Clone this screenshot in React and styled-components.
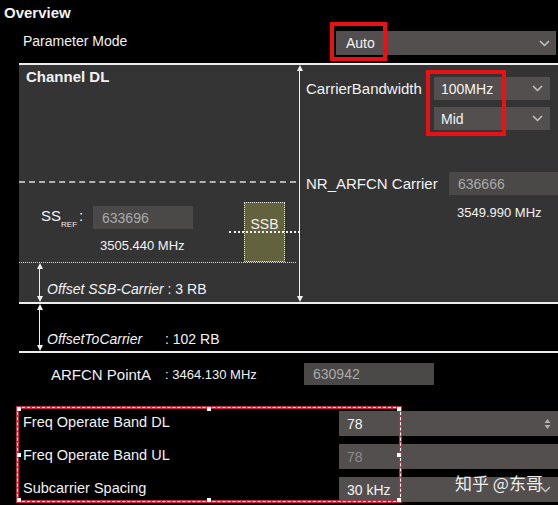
import styled, { createGlobalStyle } from "styled-components";

const GlobalStyle = createGlobalStyle`
  html, body {
    margin: 0;
    padding: 0;
    background: #000;
  }
  body {
    font-family: "Liberation Sans", Arial, sans-serif;
    color: #f2f2f2;
  }
`;

const Page = styled.div`
  position: relative;
  width: 558px;
  height: 505px;
  overflow: hidden;
  background: #000;
`;

const Heading = styled.div`
  height: 24px;
  line-height: 26px;
  padding-left: 4px;
  font-size: 15px;
  font-weight: bold;
`;

const ParamRow = styled.div`
  display: flex;
  align-items: center;
  height: 24px;
  margin-top: 7px;
  padding-left: 23px;
`;

const Label = styled.div`
  flex: none;
  width: ${(p) => (p.$w ? `${p.$w}px` : "auto")};
  font-size: ${(p) => p.$size || 14}px;
  font-style: ${(p) => (p.$italic ? "italic" : "normal")};
  padding-bottom: ${(p) => p.$lift || 0}px;
  white-space: nowrap;
`;

const SelectBox = styled.div`
  position: relative;
  flex: none;
  box-sizing: border-box;
  width: ${(p) => p.$w}px;
  height: ${(p) => p.$h || 24}px;
  padding: 0 ${(p) => p.$pr || 7}px 0 ${(p) => p.$pl || 10}px;
  display: flex;
  align-items: center;
  justify-content: space-between;
  background: #524f4e;
  font-size: 14px;
  color: #f4f4f4;
`;

const Field = styled.div`
  position: relative;
  box-sizing: border-box;
  flex: ${(p) => (p.$w ? "none" : "1")};
  width: ${(p) => (p.$w ? `${p.$w}px` : "auto")};
  height: ${(p) => p.$h || 23}px;
  padding: 0 7px 0 ${(p) => p.$pl || 9}px;
  display: flex;
  align-items: center;
  justify-content: space-between;
  background: ${(p) => (p.$dark ? "#4b4948" : "#524f4e")};
  font-size: 14px;
  color: ${(p) => p.$color || "#f4f4f4"};
`;

const Highlight = styled.div`
  position: absolute;
  left: ${(p) => p.$x}px;
  top: ${(p) => p.$y}px;
  width: ${(p) => p.$w}px;
  height: ${(p) => p.$h}px;
  box-sizing: border-box;
  border: 4px solid #ea1016;
  pointer-events: none;
`;

const Panel = styled.div`
  display: flex;
  height: 237px;
  margin: 8px 0 0 19px;
  background: #353434;
  border-top: 2px solid #ededed;
  border-bottom: 2px solid #ededed;
`;

const LeftCol = styled.div`
  display: flex;
  flex-direction: column;
  width: 277px;
  flex: none;
`;

const TopBlock = styled.div`
  height: 116px;
  border-bottom: 2px dashed #b3b3b3;
`;

const PanelTitle = styled.div`
  padding: 3px 7px;
  font-size: 15px;
  font-weight: bold;
  line-height: 17px;
`;

const MidBlock = styled.div`
  display: flex;
  height: 79px;
  border-bottom: 1px dotted #dcdcdc;
`;

const SSGroup = styled.div`
  padding: 23px 0 0 22px;
`;

const SSRow = styled.div`
  display: flex;
  align-items: center;
  height: 23px;
`;

const SSLabel = styled.div`
  width: 52px;
  font-size: 15px;
  white-space: nowrap;

  sub {
    font-size: 8px;
    vertical-align: -6px;
    margin-right: 2px;
  }
`;

const FreqText = styled.div`
  margin-top: ${(p) => p.$mt || 9}px;
  padding-left: ${(p) => p.$pl}px;
  font-size: 13px;
  line-height: 15px;
`;

const SSBCol = styled.div`
  position: relative;
  margin-left: auto;
  width: 67px;
  display: flex;
  align-items: flex-end;

  &::after {
    content: "";
    position: absolute;
    left: 0;
    right: -4px;
    top: 48px;
    border-top: 2px dotted #f2f2f2;
  }
`;

const SSBBox = styled.div`
  box-sizing: border-box;
  width: 41px;
  height: 60px;
  margin-left: 15px;
  padding-top: 13px;
  text-align: center;
  background: #62633e;
  border: 1px dotted #e8e8e2;
  font-size: 14px;
  line-height: 16px;
`;

const OffsetBlock = styled.div`
  display: flex;
  flex: 1;
  padding-left: 17px;
`;

const OffsetText = styled.div`
  align-self: flex-end;
  margin-left: 4px;
  padding-bottom: ${(p) => p.$pb}px;
  font-size: 14px;
  line-height: 16px;
  white-space: nowrap;

  em {
    display: inline-block;
    width: ${(p) => (p.$labelW ? `${p.$labelW}px` : "auto")};
  }
`;

const ArrowCol = styled.div`
  display: flex;
  flex-direction: column;
  align-items: center;
  width: 7px;
  flex: none;
`;

const ArrowHead = styled.div`
  width: 0;
  height: 0;
  border-left: 3px solid transparent;
  border-right: 3px solid transparent;
  ${(p) =>
    p.$up ? "border-bottom: 6px solid #f0f0f0;" : "border-top: 6px solid #f0f0f0;"}
`;

const ArrowLine = styled.div`
  flex: 1;
  width: 1px;
  background: #f0f0f0;
`;

const RightCol = styled.div`
  flex: 1;
  padding: 12px 0 0 3px;
`;

const CarrierRow = styled.div`
  display: flex;
  align-items: flex-start;
`;

const SelectStack = styled.div`
  position: relative;
  display: flex;
  flex-direction: column;
  gap: 7px;
`;

const NRRow = styled.div`
  display: flex;
  align-items: center;
  margin-top: 42px;
`;

const OffsetRow = styled.div`
  display: flex;
  height: 47px;
  margin-left: 19px;
  padding-left: 17px;
  border-bottom: 2px solid #ededed;
`;

const PointRow = styled.div`
  display: flex;
  align-items: center;
  height: 42px;
  padding-left: 51px;
`;

const Value = styled.div`
  width: ${(p) => p.$w}px;
  font-size: 13px;
  white-space: nowrap;
`;

const BandSection = styled.div`
  position: relative;
  display: flex;
  flex-direction: column;
  gap: 8px;
  margin-top: 11px;
  padding: 5px 0 0 23px;
`;

const BandRow = styled.div`
  display: flex;
  align-items: center;
  height: 25px;
`;

const Selection = styled.div`
  position: absolute;
  left: 16px;
  top: 0;
  width: 386px;
  height: 97px;
  box-sizing: border-box;
  border: 3px solid #c8283b;
  outline: 1px dashed #ffffff;
  outline-offset: -2px;
  pointer-events: none;
`;

const Handle = styled.span`
  position: absolute;
  left: calc(${(p) => p.$x}% - 2px);
  top: calc(${(p) => p.$y}% - 2px);
  width: 4px;
  height: 4px;
  background: #fff;
`;

const Watermark = styled.div`
  position: absolute;
  left: 455px;
  top: 64px;
  font-family: "Noto Sans CJK SC", "Liberation Sans", sans-serif;
  font-size: 17px;
  color: rgba(255, 255, 255, 0.92);
  white-space: nowrap;
`;

function Chevron() {
  return (
    <svg width="11" height="7" viewBox="0 0 11 7">
      <path d="M1 1 L5.5 5.5 L10 1" fill="none" stroke="#c4c4c4" strokeWidth="1.5" />
    </svg>
  );
}

function Spinner() {
  return (
    <svg width="7" height="12" viewBox="0 0 7 12">
      <path d="M0.5 5 L3.5 1 L6.5 5 Z M0.5 7 L3.5 11 L6.5 7 Z" fill="#b0b0b0" />
    </svg>
  );
}

function VArrow() {
  return (
    <ArrowCol>
      <ArrowHead $up />
      <ArrowLine />
      <ArrowHead />
    </ArrowCol>
  );
}

const handles = [
  [0, 0], [50, 0], [100, 0],
  [0, 50], [100, 50],
  [0, 100], [50, 100], [100, 100],
];

const bands = [
  { label: "Freq Operate Band DL", value: "78", icon: <Spinner /> },
  { label: "Freq Operate Band UL", value: "78", muted: true },
  { label: "Subcarrier Spacing", value: "30 kHz", icon: <Chevron /> },
];

export default function App() {
  return (
    <Page>
      <GlobalStyle />
      <Heading>Overview</Heading>

      <ParamRow>
        <Label $w={313} $lift={4}>Parameter Mode</Label>
        <SelectBox $w={220} $pr={6}>
          Auto
          <Chevron />
          <Highlight $x={-6} $y={-9} $w={57} $h={39} />
        </SelectBox>
      </ParamRow>

      <Panel>
        <LeftCol>
          <TopBlock>
            <PanelTitle>Channel DL</PanelTitle>
          </TopBlock>
          <MidBlock>
            <SSGroup>
              <SSRow>
                <SSLabel>
                  SS<sub>REF</sub>:
                </SSLabel>
                <Field $w={100} $color="#a9a9a9" $dark>633696</Field>
              </SSRow>
              <FreqText $pl={59}>3505.440 MHz</FreqText>
            </SSGroup>
            <SSBCol>
              <SSBBox>SSB</SSBBox>
            </SSBCol>
          </MidBlock>
          <OffsetBlock>
            <VArrow />
            <OffsetText $pb={5}>
              <em>Offset SSB-Carrier</em> : 3 RB
            </OffsetText>
          </OffsetBlock>
        </LeftCol>

        <VArrow />

        <RightCol>
          <CarrierRow>
            <Label $w={128} $size={15}>
              <span style={{ lineHeight: "23px" }}>CarrierBandwidth :</span>
            </Label>
            <SelectStack>
              <SelectBox $w={116} $h={23} $pl={7}>
                100MHz
                <Chevron />
              </SelectBox>
              <SelectBox $w={116} $h={23} $pl={7}>
                Mid
                <Chevron />
              </SelectBox>
              <Highlight $x={-8} $y={-7} $w={80} $h={66} />
            </SelectStack>
          </CarrierRow>
          <NRRow>
            <Label $w={143} $size={15}>NR_ARFCN Carrier</Label>
            <Field $color="#a9a9a9" $dark>636666</Field>
          </NRRow>
          <FreqText $pl={151} $mt={10}>3549.990 MHz</FreqText>
        </RightCol>
      </Panel>

      <OffsetRow>
        <VArrow />
        <OffsetText $pb={4} $labelW={118}>
          <em>OffsetToCarrier</em>: 102 RB
        </OffsetText>
      </OffsetRow>

      <PointRow>
        <Label $w={114} $size={15}>ARFCN PointA</Label>
        <Value $w={139}>: 3464.130 MHz</Value>
        <Field $w={130} $h={22} $color="#a9a9a9" $dark>630942</Field>
      </PointRow>

      <BandSection>
        {bands.map((band) => (
          <BandRow key={band.label}>
            <Label $w={316} $size={14.5} $lift={4}>{band.label}</Label>
            <Field $h={25} $pl={8} $color={band.muted ? "#8c8c8c" : "#f4f4f4"}>
              {band.value}
              {band.icon}
            </Field>
          </BandRow>
        ))}
        <Selection>
          {handles.map(([x, y]) => (
            <Handle key={`${x}-${y}`} $x={x} $y={y} />
          ))}
        </Selection>
        <Watermark>知乎 @东哥</Watermark>
      </BandSection>
    </Page>
  );
}
